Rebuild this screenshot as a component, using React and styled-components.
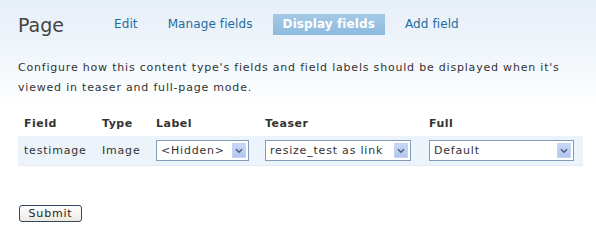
import React from 'react'
import styled, { createGlobalStyle } from 'styled-components'

const GlobalStyle = createGlobalStyle`
  html, body {
    margin: 0;
    padding: 0;
    background: #fff;
  }
  body {
    font-family: "DejaVu Sans", Verdana, sans-serif;
    color: #333;
  }
`;

const Page = styled.div`
  width: 596px;
  height: 240px;
  overflow: hidden;
  background: linear-gradient(to bottom, #e7eff8 0px, #eef4fa 45px, #f8fbfd 80px, #ffffff 110px);
`;

const Header = styled.div`
  height: 42px;
  display: flex;
  align-items: flex-start;
  padding: 0 0 0 18px;
  border-bottom: 1px solid #f0f5fa;
  box-sizing: border-box;
`;

const Title = styled.h1`
  margin: 13px 0 0 0;
  font-size: 19px;
  font-weight: normal;
  color: #444;
  line-height: 24px;
`;

const Tabs = styled.ul`
  list-style: none;
  display: flex;
  gap: 10px;
  margin: 14px 0 0 40px;
  padding: 0;
`;

const Tab = styled.li`
  height: 21px;
  line-height: 21px;
  padding: 0 10px;
  font-size: 12px;
  letter-spacing: 0.1px;
  color: ${p => (p.active ? '#fff' : '#1d6d9f')};
  font-weight: ${p => (p.active ? 'bold' : 'normal')};
  background: ${p => (p.active ? 'linear-gradient(to bottom, #a5c9e6, #8cbade)' : 'transparent')};
`;

const Content = styled.div`
  padding: 0 18px;
`;

const Description = styled.p`
  margin: 16px 0 0 0;
  font-size: 11px;
  letter-spacing: 0.8px;
  line-height: 20px;
  color: #333;
`;

const Table = styled.div`
  margin-top: 13px;
  width: 565px;
`;

const Row = styled.div`
  display: grid;
  grid-template-columns: 78px 54px 109px 164px 160px;
  align-items: center;
  height: ${p => (p.head ? '25px' : '30px')};
  background: ${p => (p.head ? 'transparent' : '#edf3fa')};
  border-bottom: ${p => (p.head ? 'none' : '1px solid #e3ebf4')};
  box-sizing: border-box;
`;

const Cell = styled.div`
  padding-left: 6px;
  font-size: 11px;
  color: #333;
  letter-spacing: ${p => (p.head ? '0.5px' : '0.8px')};
  font-weight: ${p => (p.head ? 'bold' : 'normal')};
  white-space: nowrap;
`;

const SelectBox = styled.div`
  width: ${p => p.width}px;
  height: 21px;
  box-sizing: border-box;
  border: 1px solid #7f9db9;
  background: #fff;
  display: flex;
  align-items: center;
  justify-content: space-between;
  padding: 0 2px 0 4px;
  font-size: 11px;
  letter-spacing: 0.8px;
  color: #333;
`;

const Arrow = styled.span`
  width: 14px;
  height: 15px;
  box-sizing: border-box;
  background: linear-gradient(to bottom, #c8d6f7, #b3c5f0);
  border: 1px solid #c4d2f4;
  display: flex;
  align-items: center;
  justify-content: center;
`;

const Actions = styled.div`
  margin-top: 36px;
  padding-left: 1px;
`;

const Button = styled.button`
  font-family: "DejaVu Sans", Verdana, sans-serif;
  font-size: 11px;
  letter-spacing: 0.8px;
  color: #222;
  height: 17px;
  width: 63px;
  padding: 0;
  border: 1px solid #33475e;
  border-radius: 3px;
  background: linear-gradient(to bottom, #ffffff, #ece9e2);
  line-height: 15px;
`;

const Select = ({ width, value }) => (
  <SelectBox width={width}>
    <span>{value}</span>
    <Arrow>
      <svg width="8" height="6" viewBox="0 0 8 6">
        <path d="M1 1.2 L4 4.2 L7 1.2" fill="none" stroke="#4d6185" strokeWidth="1.6" />
      </svg>
    </Arrow>
  </SelectBox>
);

export default function App() {
  return (
    <Page>
      <GlobalStyle />
      <Header>
        <Title>Page</Title>
        <Tabs>
          <Tab>Edit</Tab>
          <Tab>Manage fields</Tab>
          <Tab active>Display fields</Tab>
          <Tab>Add field</Tab>
        </Tabs>
      </Header>
      <Content>
        <Description>
          Configure how this content type's fields and field labels should be displayed when it's
          viewed in teaser and full-page mode.
        </Description>
        <Table>
          <Row head>
            <Cell head>Field</Cell>
            <Cell head>Type</Cell>
            <Cell head>Label</Cell>
            <Cell head>Teaser</Cell>
            <Cell head>Full</Cell>
          </Row>
          <Row>
            <Cell>testimage</Cell>
            <Cell>Image</Cell>
            <Cell><Select width={93} value="<Hidden>" /></Cell>
            <Cell><Select width={146} value="resize_test as link" /></Cell>
            <Cell><Select width={145} value="Default" /></Cell>
          </Row>
        </Table>
        <Actions>
          <Button>Submit</Button>
        </Actions>
      </Content>
    </Page>
  );
}
